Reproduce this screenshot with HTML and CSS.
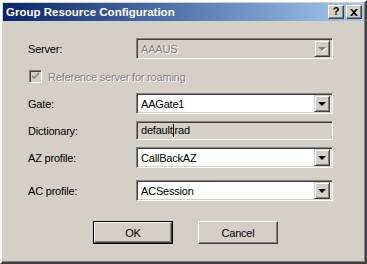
FILE: index.html
```html
<!DOCTYPE html>
<html>
<head>
<meta charset="utf-8">
<link rel="stylesheet" href="styles.css">
</head>
<body>
<div class="window">
  <div class="titlebar">
    <span class="title">Group Resource Configuration</span>
    <div class="tb-buttons">
      <span class="tb-btn help">?</span>
      <span class="tb-btn close"><svg width="8" height="7" viewBox="0 0 8 7"><path d="M0 0h2l2 2 2-2h2L5 3.5 8 7H6L4 5 2 7H0l3-3.5z" fill="#000"/></svg></span>
    </div>
  </div>
  <div class="content">
    <div class="row r-server">
      <span class="lbl">Server:</span>
      <div class="combo disabled">
        <span class="val">AAAUS</span>
        <span class="arrow"><span class="tri"></span></span>
      </div>
    </div>
    <div class="row r-check">
      <span class="check"><svg width="9" height="9" viewBox="0 0 9 9"><path d="M1 3v2l2 2 5-5V0L3 5z" fill="#808080"/></svg></span>
      <span class="check-lbl">Reference server for roaming</span>
    </div>
    <div class="row r-gate">
      <span class="lbl">Gate:</span>
      <div class="combo">
        <span class="val">AAGate1</span>
        <span class="arrow"><span class="tri"></span></span>
      </div>
    </div>
    <div class="row r-dict">
      <span class="lbl">Dictionary:</span>
      <div class="edit">
        <span class="val">default<span class="caret"></span>.rad</span>
      </div>
    </div>
    <div class="row r-az">
      <span class="lbl">AZ profile:</span>
      <div class="combo">
        <span class="val">CallBackAZ</span>
        <span class="arrow"><span class="tri"></span></span>
      </div>
    </div>
    <div class="row r-ac">
      <span class="lbl">AC profile:</span>
      <div class="combo">
        <span class="val">ACSession</span>
        <span class="arrow"><span class="tri"></span></span>
      </div>
    </div>
    <div class="buttons">
      <span class="btn default"><span class="btn-in">OK</span></span>
      <span class="btn"><span class="btn-in">Cancel</span></span>
    </div>
  </div>
</div>
</body>
</html>
```
FILE: styles.css
```css
* { box-sizing: border-box; }
html, body { margin: 0; padding: 0; background: #d4d0c8; }
body { font-family: "Liberation Sans", Arial, sans-serif; font-size: 11px; color: #000; letter-spacing: -0.2px; }

.window {
  width: 367px;
  height: 264px;
  background: #d4d0c8;
  border-style: solid;
  border-width: 2px;
  border-color: #fff #404040 #404040 #fff;
  box-shadow: inset -1px -1px 0 #808080;
  padding: 1px;
  display: flex;
  flex-direction: column;
}

.titlebar {
  height: 18px;
  background: linear-gradient(to right, #0a246a, #a6caf0);
  display: flex;
  align-items: center;
  justify-content: space-between;
  padding: 0 2px 0 3px;
}
.title {
  color: #fff;
  font-weight: bold;
  font-size: 11.5px;
  letter-spacing: 0;
}
.tb-buttons { display: flex; gap: 2px; }
.tb-btn {
  width: 16px;
  height: 14px;
  background: #d4d0c8;
  border: 1px solid;
  border-color: #fff #404040 #404040 #fff;
  box-shadow: inset -1px -1px 0 #808080;
  display: flex;
  align-items: center;
  justify-content: center;
  font-weight: bold;
  font-size: 11px;
  line-height: 1;
}
.tb-btn.help { padding-bottom: 1px; }

.content {
  flex: 1;
  padding-left: 25px;
  display: flex;
  flex-direction: column;
}

.row { display: flex; align-items: center; }
.lbl { width: 108px; flex: none; }

.r-server { margin-top: 17px; }
.r-check { margin-top: 11px; height: 13px; }
.r-gate { margin-top: 10px; }
.r-dict { margin-top: 7px; }
.r-az { margin-top: 7px; }
.r-ac { margin-top: 12px; }

.combo, .edit {
  width: 197px;
  height: 21px;
  background: #fff;
  border: 1px solid;
  border-color: #808080 #fff #fff #808080;
  box-shadow: inset 1px 1px 0 #404040, inset -1px -1px 0 #d4d0c8;
  display: flex;
  align-items: center;
  padding: 2px;
}
.edit { height: 19px; background: #d4d0c8; }
.val { flex: 1; padding-left: 2px; font-size: 11px; }
.combo.disabled { background: #d4d0c8; }
.combo.disabled .val { color: #808080; text-shadow: 1px 1px 0 #fff; }

.arrow {
  width: 16px;
  height: 17px;
  background: #d4d0c8;
  border: 1px solid;
  border-color: #d4d0c8 #404040 #404040 #d4d0c8;
  box-shadow: inset 1px 1px 0 #fff, inset -1px -1px 0 #808080;
  display: flex;
  align-items: center;
  justify-content: center;
}
.tri {
  width: 0;
  height: 0;
  border-left: 4px solid transparent;
  border-right: 4px solid transparent;
  border-top: 4px solid #000;
  margin-top: 1px;
}
.disabled .tri { border-top-color: #808080; filter: drop-shadow(1px 1px 0 #fff); }

.check {
  width: 13px;
  height: 13px;
  border: 1px solid;
  border-color: #808080 #fff #fff #808080;
  box-shadow: inset 1px 1px 0 #404040, inset -1px -1px 0 #d4d0c8;
  background: #d4d0c8;
  display: flex;
  align-items: center;
  justify-content: center;
  margin-left: 1px;
}
.check svg { display: block; }
.check-lbl {
  margin-left: 6px;
  color: #808080;
  text-shadow: 1px 1px 0 #fff;
  font-size: 11px;
}

.caret {
  display: inline-block;
  width: 1px;
  height: 13px;
  background: #000;
  vertical-align: -3px;
  margin-right: -2px;
  position: relative;
}

.buttons {
  margin-top: 20px;
  display: flex;
  gap: 25px;
  padding-left: 65px;
}
.btn {
  width: 80px;
  height: 23px;
  border: 1px solid;
  border-color: #fff #404040 #404040 #fff;
  box-shadow: inset -1px -1px 0 #808080;
  display: flex;
  align-items: center;
  justify-content: center;
}
.btn.default {
  border: 1px solid #000;
  box-shadow: none;
}
.btn.default .btn-in {
  width: 100%;
  height: 100%;
  border: 1px solid;
  border-color: #fff #404040 #404040 #fff;
  box-shadow: inset -1px -1px 0 #808080;
}
.btn-in {
  display: flex;
  align-items: center;
  justify-content: center;
  font-size: 11px;
}
```
